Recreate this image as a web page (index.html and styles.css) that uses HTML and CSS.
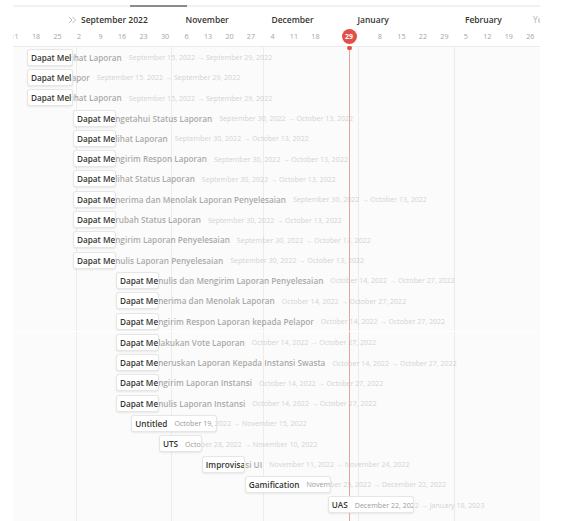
FILE: index.html
```html
<!DOCTYPE html>
<html lang="id">
<head>
    <meta charset="UTF-8">
    <meta name="viewport" content="width=device-width, initial-scale=1.0">
    <title>Timeline</title>
    <link rel="stylesheet" href="styles.css">
</head>
<body>
<div class="timeline">

    <!-- Scrollbar oben -->
    <div class="scroll">
        <div class="track"><div class="thumb"></div></div>
    </div>

    <!-- Kopfzeile: Monate und Wochen -->
    <div class="header">
        <div class="months" id="months">
            <svg class="jump" width="9" height="8" viewBox="0 0 9 8">
                <path d="M1 1l3 3-3 3M4.5 1l3 3-3 3" fill="none" stroke="#b4b4b2" stroke-width="0.9"/>
            </svg>
        </div>
        <div class="ticks" id="ticks">
            <div class="today-badge">29</div>
        </div>
    </div>

    <!-- Zeilen -->
    <div class="body" id="rows">
        <div class="today-line"></div>
        <div class="today-dot"></div>
    </div>
</div>

<script>
const DAY = 3.07;
const ZERO = 63; // 1. Oktober 2022
const ORIGIN = Date.UTC(2022, 9, 1);
const MONATE = ["January", "February", "March", "April", "May", "June", "July",
    "August", "September", "October", "November", "December"];

function xVon(d) {
    return ZERO + (Date.UTC(d[0], d[1] - 1, d[2]) - ORIGIN) / 864e5 * DAY;
}

function format(d) {
    return MONATE[d[1] - 1] + " " + d[2] + ", " + d[0];
}

const A = [[2022, 9, 15], [2022, 9, 29]];
const B = [[2022, 9, 30], [2022, 10, 13]];
const C = [[2022, 10, 14], [2022, 10, 27]];

const aufgaben = [
    ["Dapat Melihat Laporan", A],
    ["Dapat Melapor", A],
    ["Dapat Melihat Laporan", A],
    ["Dapat Mengetahui Status Laporan", B],
    ["Dapat Melihat Laporan", B],
    ["Dapat Mengirim Respon Laporan", B],
    ["Dapat Melihat Status Laporan", B],
    ["Dapat Menerima dan Menolak Laporan Penyelesaian", B],
    ["Dapat Merubah Status Laporan", B],
    ["Dapat Mengirim Laporan Penyelesaian", B],
    ["Dapat Menulis Laporan Penyelesaian", B],
    ["Dapat Menulis dan Mengirim Laporan Penyelesaian", C],
    ["Dapat Menerima dan Menolak Laporan", C],
    ["Dapat Mengirim Respon Laporan kepada Pelapor", C],
    ["Dapat Melakukan Vote Laporan", C],
    ["Dapat Meneruskan Laporan Kepada Instansi Swasta", C],
    ["Dapat Mengirim Laporan Instansi", C],
    ["Dapat Menulis Laporan Instansi", C],
    ["Untitled", [[2022, 10, 19], [2022, 11, 15]]],
    ["UTS", [[2022, 10, 28], [2022, 11, 10]]],
    ["Improvisasi UI", [[2022, 11, 11], [2022, 11, 24]]],
    ["Gamification", [[2022, 11, 25], [2022, 12, 22]]],
    ["UAS", [[2022, 12, 22], [2023, 1, 18]]]
];

// Monatslinien
const rows = document.getElementById("rows");
[[2022, 10, 1], [2022, 11, 1], [2022, 12, 1], [2023, 1, 1], [2023, 2, 1], [2023, 3, 1]].forEach(d => {
    const line = document.createElement("div");
    line.className = "gridline";
    line.style.left = xVon(d) + "px";
    rows.appendChild(line);
});

// Zeilen
aufgaben.forEach((a, i) => {
    const start = a[1][0];
    const ende = a[1][1];
    const label = `<span class="title">${a[0]}</span><span class="dates">${format(start)} → ${format(ende)}</span>`;
    const row = document.createElement("div");
    row.className = "row";
    row.innerHTML = `
        <div class="bar" style="margin-left:${xVon(start)}px">
            <div class="label ghost">${label}</div>
            <div class="card" style="width:${xVon(ende) - xVon(start) + DAY}px"><div class="label">${label}</div></div>
        </div>`;
    rows.appendChild(row);
    if (i === 13) {
        const seam = document.createElement("div");
        seam.className = "seam";
        rows.appendChild(seam);
    }
});

// Wochen
const ticks = document.getElementById("ticks");
for (let t = Date.UTC(2022, 8, 11); t <= Date.UTC(2023, 1, 26); t += 7 * 864e5) {
    const d = new Date(t);
    const tag = [d.getUTCFullYear(), d.getUTCMonth() + 1, d.getUTCDate()];
    if ((tag[1] === 12 && tag[2] === 25) || (tag[1] === 1 && tag[2] === 1)) continue;
    const el = document.createElement("span");
    el.className = "tick";
    el.textContent = tag[2];
    el.style.left = xVon(tag) + "px";
    ticks.appendChild(el);
}

// Monate
const months = document.getElementById("months");
[["September 2022", 68], ["November", xVon([2022, 11, 6]) - 1], ["December", xVon([2022, 12, 4]) - 1],
 ["January", xVon([2023, 1, 1]) - 1], ["February", xVon([2023, 2, 5]) - 1], ["Ye", 520]].forEach(m => {
    const el = document.createElement("span");
    el.className = m[0] === "Ye" ? "month faint" : "month";
    el.textContent = m[0];
    el.style.left = m[1] + "px";
    months.appendChild(el);
});
</script>
</body>
</html>
```

FILE: styles.css
```css
body {
    margin: 0;
    background: #fff;
    font-family: "Open Sans", sans-serif;
    color: #37352f;
}

.timeline {
    position: relative;
    margin-left: 13px;
    width: 527px;
    height: 521px;
    overflow: hidden;
}

.scroll {
    height: 12px;
    display: flex;
    align-items: center;
}

.track {
    width: 100%;
    height: 2px;
    background: #f1f1f0;
}

.thumb {
    margin-left: 117px;
    width: 57px;
    height: 2px;
    background: #8d8c89;
}

.header {
    height: 34px;
    border-bottom: 1px solid #ebebea;
}

.months {
    position: relative;
    height: 15px;
}

.jump {
    position: absolute;
    left: 55px;
    top: 4px;
}

.month {
    position: absolute;
    top: 0;
    line-height: 15px;
    font-size: 8.5px;
    font-weight: 600;
    white-space: nowrap;
}

.month.faint {
    color: #b4b4b2;
    font-weight: 400;
}

.ticks {
    position: relative;
    height: 19px;
}

.tick {
    position: absolute;
    top: 0;
    line-height: 19px;
    font-size: 7.2px;
    color: #a5a4a1;
    transform: translateX(-50%);
}

.today-badge {
    position: absolute;
    left: 328.5px;
    top: 1.5px;
    width: 15px;
    height: 15px;
    border-radius: 50%;
    background: #e24f48;
    color: #fff;
    font-size: 7px;
    font-weight: 700;
    line-height: 15px;
    text-align: center;
    z-index: 5;
}

.body {
    position: relative;
    height: 474px;
    background: #fbfbfb;
}

.gridline {
    position: absolute;
    top: 0;
    bottom: 0;
    width: 1px;
    background: #ececeb;
    z-index: 0;
}

.today-line {
    position: absolute;
    left: 335.5px;
    top: 0;
    bottom: 0;
    width: 1.5px;
    background: #eba3a0;
    z-index: 2;
}

.today-dot {
    position: absolute;
    left: 334px;
    top: -1.5px;
    width: 4.5px;
    height: 4.5px;
    border-radius: 50%;
    background: #e24f48;
    z-index: 2;
}

.row {
    height: 20.3px;
    display: flex;
    align-items: center;
}

.bar {
    position: relative;
}

.label {
    display: flex;
    align-items: center;
    height: 17px;
    padding-left: 4px;
    white-space: nowrap;
}

.ghost {
    position: relative;
    z-index: 1;
    opacity: 0.42;
}

.card {
    position: absolute;
    left: 0;
    top: 0;
    height: 17px;
    box-sizing: border-box;
    border: 1px solid rgba(55, 53, 47, 0.12);
    border-radius: 3px;
    background: #fff;
    box-shadow: 0 1px 2px rgba(15, 15, 15, 0.08);
    overflow: hidden;
    z-index: 3;
}

.card .label {
    height: 15px;
    padding-left: 3px;
}

.title {
    font-size: 8.2px;
    font-weight: 600;
}

.dates {
    margin-left: 7px;
    font-size: 7.1px;
    color: #9b9a97;
}

.seam {
    position: relative;
    height: 1px;
    background: #fff;
    z-index: 4;
}
```
